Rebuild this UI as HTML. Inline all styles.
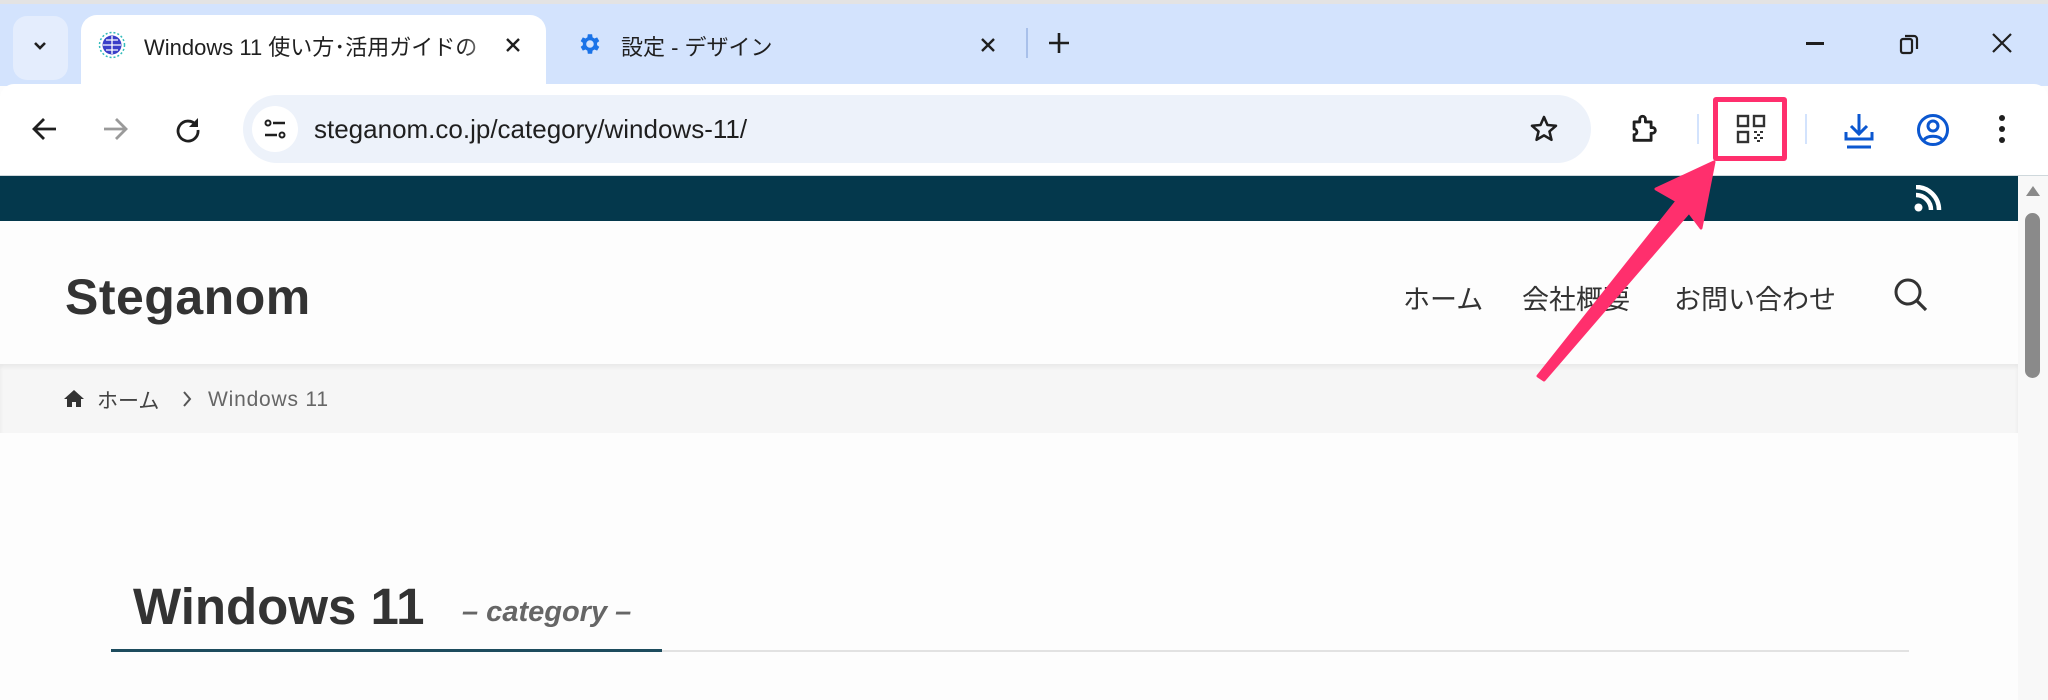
<!DOCTYPE html>
<html><head><meta charset="utf-8"><style>
*{margin:0;padding:0;box-sizing:border-box}
body{width:2048px;height:700px;overflow:hidden;background:#fdfdfd;font-family:"Liberation Sans","Noto Sans CJK JP",sans-serif;position:relative}
.a{position:absolute}
</style></head><body>
<!-- tab strip -->
<div class="a" style="left:0;top:0;width:2048px;height:4px;background:#e3e3e3"></div>
<div class="a" style="left:0;top:4px;width:2048px;height:82px;background:#d3e3fd"></div>
<div class="a" style="left:13px;top:16px;width:55px;height:64px;background:#e4edfd;border-radius:14px"></div>
<svg class="a" style="left:30px;top:36px" width="20" height="20" viewBox="0 0 20 20"><path d="M5 7l5 5 5-5" stroke="#1f1f1f" stroke-width="2.6" fill="none"/></svg>
<div class="a" style="left:81px;top:15px;width:465px;height:75px;background:#fff;border-radius:16px 16px 0 0"></div>
<svg class="a" style="left:98px;top:31px" width="28" height="28" viewBox="0 0 28 28"><circle cx="14" cy="14" r="12.5" fill="none" stroke="#3bb" stroke-width="1.5" stroke-dasharray="2 2"/><circle cx="14" cy="14" r="9.5" fill="#3a3fc8"/><path d="M5 14h18M14 5v18M8 9h12M8 19h12" stroke="#fff" stroke-width="1.3"/></svg>
<div class="a" style="left:144px;top:30px;font-size:22px;color:#1f1f1f;white-space:nowrap">Windows 11 使い方･活用ガイドの</div>
<div class="a" style="left:460px;top:30px;width:50px;height:30px;background:linear-gradient(90deg,rgba(255,255,255,0),#fff)"></div>
<svg class="a" style="left:503px;top:35px" width="20" height="20" viewBox="0 0 20 20"><path d="M4 4l12 12M16 4L4 16" stroke="#1f1f1f" stroke-width="2.4"/></svg>
<svg class="a" style="left:576px;top:31px" width="26" height="26" viewBox="0 0 24 24"><path fill="#1a73e8" d="M19.4 13a7.5 7.5 0 000-2l2.1-1.6-2-3.5-2.5 1a7.6 7.6 0 00-1.7-1L14.9 3h-4l-.4 2.9a7.6 7.6 0 00-1.7 1l-2.5-1-2 3.5L6.4 11a7.5 7.5 0 000 2l-2.1 1.6 2 3.5 2.5-1a7.6 7.6 0 001.7 1l.4 2.9h4l.4-2.9a7.6 7.6 0 001.7-1l2.5 1 2-3.5zM12.9 15.5a3.5 3.5 0 110-7 3.5 3.5 0 010 7z"/></svg>
<div class="a" style="left:621px;top:30px;font-size:22px;color:#1f1f1f;white-space:nowrap">設定 - デザイン</div>
<svg class="a" style="left:978px;top:35px" width="20" height="20" viewBox="0 0 20 20"><path d="M4 4l12 12M16 4L4 16" stroke="#1f1f1f" stroke-width="2.4"/></svg>
<div class="a" style="left:1026px;top:28px;width:2px;height:30px;background:#a8c0ea"></div>
<svg class="a" style="left:1046px;top:30px" width="26" height="26" viewBox="0 0 26 26"><path d="M13 3v20M3 13h20" stroke="#1f1f1f" stroke-width="2.6"/></svg>
<div class="a" style="left:1806px;top:42px;width:18px;height:2.5px;background:#1f1f1f"></div>
<svg class="a" style="left:1898px;top:32px" width="22" height="24" viewBox="0 0 22 24"><rect x="3" y="7" width="11" height="14" rx="2" fill="none" stroke="#1f1f1f" stroke-width="2.2"/><path d="M7 4h9a3 3 0 013 3v10" fill="none" stroke="#1f1f1f" stroke-width="2.2"/></svg>
<svg class="a" style="left:1990px;top:31px" width="24" height="24" viewBox="0 0 24 24"><path d="M3 3l18 18M21 3L3 21" stroke="#1f1f1f" stroke-width="2.2"/></svg>
<!-- toolbar -->
<div class="a" style="left:0;top:84px;width:2048px;height:92px;background:#fff;border-radius:14px 14px 0 0"></div>
<svg class="a" style="left:30px;top:116px" width="28" height="26" viewBox="0 0 28 26"><path d="M26 13H5M14 3L4 13l10 10" stroke="#1f1f1f" stroke-width="2.8" fill="none"/></svg>
<svg class="a" style="left:102px;top:116px" width="28" height="26" viewBox="0 0 28 26"><path d="M2 13h21M14 3l10 10-10 10" stroke="#9a9a9a" stroke-width="2.8" fill="none"/></svg>
<svg class="a" style="left:174px;top:115px" width="28" height="28" viewBox="0 0 28 28"><path d="M22 10A10 10 0 1024 15" stroke="#1f1f1f" stroke-width="2.8" fill="none"/><path d="M24 3v9h-9" fill="#1f1f1f"/></svg>
<div class="a" style="left:243px;top:95px;width:1348px;height:68px;background:#edf2fa;border-radius:34px"></div>
<div class="a" style="left:252px;top:106px;width:46px;height:46px;background:#fff;border-radius:23px"></div>
<svg class="a" style="left:262px;top:116px" width="26" height="26" viewBox="0 0 26 26"><circle cx="6" cy="7" r="2.5" fill="none" stroke="#1f1f1f" stroke-width="2"/><path d="M11 7h12M3 19h12" stroke="#1f1f1f" stroke-width="2.4"/><circle cx="20" cy="19" r="2.5" fill="none" stroke="#1f1f1f" stroke-width="2"/></svg>
<div class="a" style="left:314px;top:114px;font-size:26px;color:#1f1f1f;white-space:nowrap">steganom.co.jp/category/windows-11/</div>
<svg class="a" style="left:1528px;top:113px" width="32" height="32" viewBox="0 0 24 24"><path d="M12 3l2.6 6 6.4.6-4.9 4.2 1.5 6.3L12 16.8 6.4 20.1l1.5-6.3L3 9.6 9.4 9z" fill="none" stroke="#1f1f1f" stroke-width="1.9" stroke-linejoin="round"/></svg>
<svg class="a" style="left:1627px;top:112px" width="34" height="34" viewBox="0 0 24 24"><path d="M5 7h4V5a2 2 0 014 0v2h4v4h1a2 2 0 010 4h-1v5H5v-4a2 2 0 000-4V7z" fill="none" stroke="#1f1f1f" stroke-width="2" stroke-linejoin="round"/></svg>
<div class="a" style="left:1697px;top:114px;width:2px;height:30px;background:#d3e3fd"></div>
<div class="a" style="left:1713px;top:97px;width:74px;height:64px;border:5px solid #ff2f6d;border-radius:3px"></div>
<svg class="a" style="left:1736px;top:114px" width="30" height="30" viewBox="0 0 30 30" fill="none" stroke="#333" stroke-width="2.4"><rect x="2" y="2" width="10" height="10"/><rect x="18" y="2" width="10" height="10"/><rect x="2" y="18" width="10" height="10"/><path d="M18 18h3M24 18h3M21 21h3M18 24h3M24 24h3M21 27h3" stroke-width="2"/></svg>
<div class="a" style="left:1805px;top:114px;width:2px;height:30px;background:#d3e3fd"></div>
<svg class="a" style="left:1843px;top:112px" width="32" height="38" viewBox="0 0 32 38"><path d="M16 2v20M8 14l8 8 8-8" stroke="#0b57d0" stroke-width="3" fill="none"/><path d="M3 20v7h26v-7" stroke="#0b57d0" stroke-width="3" fill="none"/><path d="M4 35h24" stroke="#0b57d0" stroke-width="3"/></svg>
<svg class="a" style="left:1916px;top:113px" width="34" height="34" viewBox="0 0 34 34"><circle cx="17" cy="17" r="14.5" fill="none" stroke="#0b57d0" stroke-width="3"/><circle cx="17" cy="13" r="5" fill="none" stroke="#0b57d0" stroke-width="3"/><path d="M8 27c3-5 15-5 18 0" stroke="#0b57d0" stroke-width="3" fill="none"/></svg>
<div class="a" style="left:1999px;top:115px;width:6px;height:6px;border-radius:3px;background:#1f1f1f;box-shadow:0 11px 0 #1f1f1f,0 22px 0 #1f1f1f"></div>
<div class="a" style="left:0;top:175px;width:2048px;height:1px;background:#cfd8dc"></div>
<!-- page -->
<div class="a" style="left:0;top:176px;width:2018px;height:45px;background:#04384c"></div>
<svg class="a" style="left:1914px;top:185px" width="28" height="27" viewBox="0 0 28 27"><circle cx="4.5" cy="22.5" r="4" fill="#fff"/><path d="M2 10a15 15 0 0115 15M2 2a23 23 0 0123 23" stroke="#fff" stroke-width="4.5" fill="none"/></svg>
<div class="a" style="left:0;top:221px;width:2018px;height:144px;background:#fdfdfd"></div>
<div class="a" style="left:65px;top:268px;font-size:50px;font-weight:bold;color:#333;letter-spacing:0.5px">Steganom</div>
<div class="a" style="left:1403px;top:278px;font-size:27px;color:#333;white-space:nowrap">ホーム</div>
<div class="a" style="left:1522px;top:278px;font-size:27px;color:#333;white-space:nowrap">会社概要</div>
<div class="a" style="left:1674px;top:278px;font-size:27px;color:#333;white-space:nowrap">お問い合わせ</div>
<svg class="a" style="left:1891px;top:276px" width="40" height="38" viewBox="0 0 40 38"><circle cx="17" cy="16" r="12" fill="none" stroke="#333" stroke-width="3"/><path d="M26 25l9 9" stroke="#333" stroke-width="3.2"/></svg>
<div class="a" style="left:0;top:364px;width:2018px;height:69px;background:#f6f6f6;box-shadow:inset 0 3px 4px rgba(0,0,0,0.06)"></div>
<svg class="a" style="left:64px;top:389px" width="20" height="18" viewBox="0 0 20 18"><path d="M10 1L0 10h3v8h5v-5h4v5h5v-8h3z" fill="#333"/></svg>
<div class="a" style="left:97px;top:390px;font-size:21px;line-height:24px;color:#444;white-space:nowrap">ホーム</div>
<svg class="a" style="left:181px;top:389px" width="12" height="20" viewBox="0 0 12 20"><path d="M3 3l6 7-6 7" stroke="#555" stroke-width="2" fill="none"/></svg>
<div class="a" style="left:208px;top:388px;font-size:21px;line-height:24px;color:#666;white-space:nowrap;letter-spacing:0.8px">Windows 11</div>
<div class="a" style="left:133px;top:577px;font-size:51px;font-weight:bold;color:#333;white-space:nowrap">Windows 11</div>
<div class="a" style="left:462px;top:596px;font-size:29px;font-style:italic;font-weight:bold;color:#666;white-space:nowrap">– category –</div>
<div class="a" style="left:111px;top:650px;width:1798px;height:2px;background:#e2e2e2"></div>
<div class="a" style="left:111px;top:649px;width:551px;height:3px;background:#1d4c5e"></div>
<!-- scrollbar -->
<div class="a" style="left:2018px;top:176px;width:30px;height:524px;background:#f8f8f8"></div>
<svg class="a" style="left:2024px;top:184px" width="18" height="14" viewBox="0 0 18 14"><path d="M9 2L2 12h14z" fill="#8a8a8a"/></svg>
<div class="a" style="left:2025px;top:213px;width:15px;height:165px;background:#8a8a8a;border-radius:8px"></div>
<!-- arrow -->
<svg class="a" style="left:0;top:0" width="2048" height="700" viewBox="0 0 2048 700"><path d="M1714 162L1656 189L1677 201L1538 376L1544 380L1689 212L1701 228Z" fill="#ff2f6d" stroke="#ff2f6d" stroke-width="3" stroke-linejoin="round"/></svg>
</body></html>
